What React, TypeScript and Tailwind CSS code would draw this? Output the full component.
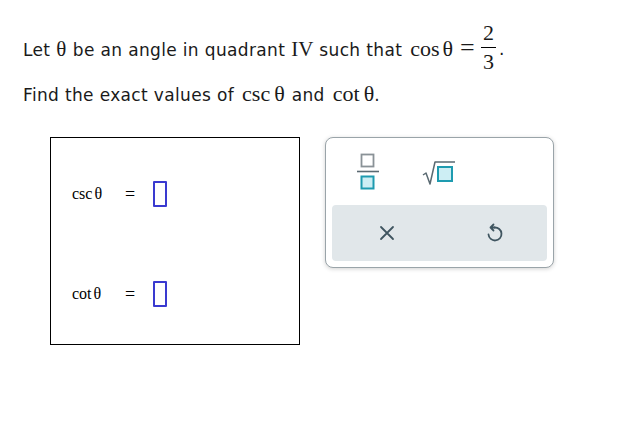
import React from "react";

const serif = { fontFamily: '"Liberation Serif", "Times New Roman", serif' };

const AnswerBox: React.FC = () => (
  <span className="inline-block w-[14px] h-[26px] border-2 border-[#3a3ad0] rounded-[1px]" />
);

const Row: React.FC<{ label: string }> = ({ label }) => (
  <div className="flex items-center h-[26px]">
    <span className="w-[53px] text-[16px] text-black" style={serif}>
      {label}
      <span className="ml-[2px]">θ</span>
    </span>
    <span className="w-[28px] text-[18px] text-black" style={serif}>
      =
    </span>
    <AnswerBox />
  </div>
);

const FractionIcon: React.FC = () => (
  <svg width="24" height="38" viewBox="0 0 24 38">
    <rect x="5.5" y="2.5" width="12" height="12" fill="none" stroke="#8a9297" strokeWidth="1.8" />
    <line x1="1" y1="19.5" x2="23" y2="19.5" stroke="#5a6a72" strokeWidth="1.6" />
    <rect x="5.5" y="24.5" width="12" height="12" fill="#cdeef4" stroke="#1e9bb0" strokeWidth="2" />
  </svg>
);

const SqrtIcon: React.FC = () => (
  <svg width="34" height="26" viewBox="0 0 34 26">
    <path d="M1 15 L4 13 L8 24 L13 2 L33 2" fill="none" stroke="#5a6a72" strokeWidth="1.5" strokeLinejoin="round" />
    <rect x="16" y="7" width="14" height="14" fill="#cdeef4" stroke="#1e9bb0" strokeWidth="2" />
  </svg>
);

const XIcon: React.FC = () => (
  <svg width="16" height="16" viewBox="0 0 16 16">
    <path d="M2 2 L14 14 M14 2 L2 14" stroke="#3f5560" strokeWidth="1.8" strokeLinecap="round" />
  </svg>
);

const UndoIcon: React.FC = () => (
  <svg width="20" height="20" viewBox="0 0 20 20">
    <path
      d="M9.5 4.5 A6.5 6.5 0 1 1 3.5 11.5"
      fill="none"
      stroke="#3f5560"
      strokeWidth="1.8"
      strokeLinecap="round"
    />
    <path
      d="M8.5 1.5 L5.5 4.5 L8.5 7.5 M5.5 4.5 L9.5 4.5"
      fill="none"
      stroke="#3f5560"
      strokeWidth="1.8"
      strokeLinecap="round"
      strokeLinejoin="round"
    />
  </svg>
);

export default function App() {
  return (
    <div
      className="w-[620px] h-[427px] bg-white text-[#1a1a1a] pt-[18px] pl-[23px]"
      style={{ fontFamily: '"DejaVu Sans", Verdana, sans-serif' }}
    >
      <div className="flex items-center h-[58px] text-[17px] tracking-[0.35px]">
        <div className="flex items-baseline">
          <span>Let</span>
          <span className="ml-[6px] text-[21px]" style={serif}>θ</span>
          <span className="ml-[6px]">be an angle in quadrant</span>
          <span className="ml-[6px] text-[21px] tracking-normal" style={serif}>IV</span>
          <span className="ml-[6px]">such that</span>
          <span className="ml-[8px] text-[22px] tracking-normal" style={serif}>
            cos<span className="ml-[3px]">θ</span>
          </span>
          <span className="ml-[7px] text-[26px]" style={serif}>=</span>
        </div>
        <span className="ml-[6px] flex flex-col items-center text-[22px] leading-[22px]" style={serif}>
          <span className="px-[1px]">2</span>
          <span className="w-[15px] h-[1px] bg-black my-[3px]" />
          <span className="px-[1px]">3</span>
        </span>
        <span className="ml-[3px] mt-[6px]">.</span>
      </div>
      <div className="flex items-baseline h-[34px] pt-[1px] text-[17px] tracking-[0.35px]">
        <span>Find the exact values of</span>
        <span className="ml-[8px] text-[22px] tracking-normal" style={serif}>
          csc<span className="ml-[4px]">θ</span>
        </span>
        <span className="ml-[7px]">and</span>
        <span className="ml-[8px] text-[22px] tracking-normal" style={serif}>
          cot<span className="ml-[4px]">θ</span>
        </span>
        <span>.</span>
      </div>

      <div className="flex items-start mt-[27px] ml-[27px] gap-[25px]">
        <div className="w-[250px] h-[208px] border border-black pl-[21px] pt-[43px] flex flex-col gap-[74px]">
          <Row label="csc" />
          <Row label="cot" />
        </div>

        <div className="w-[229px] h-[131px] border border-[#9aa4a9] rounded-[8px] shadow-[0_1px_4px_rgba(0,0,0,0.18)] bg-white px-[6px] pt-[13px] pb-[6px] flex flex-col">
          <div className="flex items-center h-[40px]">
            <div className="w-[70px] flex justify-center pl-[2px]">
              <FractionIcon />
            </div>
            <div className="w-[50px] flex justify-center ml-[12px] mt-[4px]">
              <SqrtIcon />
            </div>
          </div>
          <div className="mt-[14px] flex-1 bg-[#e1e7ea] rounded-[4px] flex items-center">
            <div className="w-[108px] flex justify-center pl-[2px]">
              <XIcon />
            </div>
            <div className="w-[108px] flex justify-center pl-[4px]">
              <UndoIcon />
            </div>
          </div>
        </div>
      </div>
    </div>
  );
}
